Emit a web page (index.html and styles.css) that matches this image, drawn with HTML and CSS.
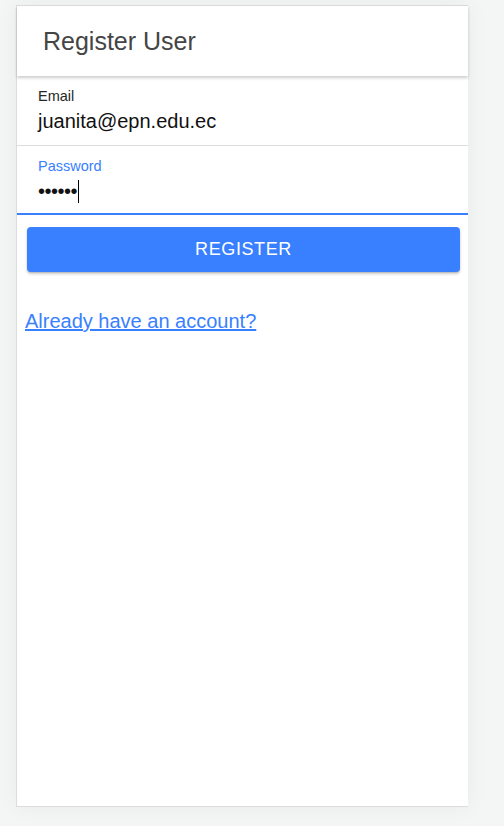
FILE: index.html
```html
<!DOCTYPE html>
<html lang="en">
<head>
<meta charset="utf-8">
<title>Register User</title>
<link rel="stylesheet" href="styles.css">
</head>
<body>
<div class="stage">
  <div class="card">
    <header class="toolbar">
      <h1 class="title">Register User</h1>
    </header>
    <main class="content">
      <div class="item">
        <div class="label">Email</div>
        <div class="value">juanita@epn.edu.ec</div>
      </div>
      <div class="item item-focused">
        <div class="label label-focused">Password</div>
        <div class="value value-password">••••••<span class="caret"></span></div>
      </div>
      <div class="btn-row">
        <button class="btn" type="button">REGISTER</button>
      </div>
      <a class="link" href="#">Already have an account?</a>
    </main>
  </div>
</div>
</body>
</html>
```
FILE: styles.css
```css
html, body {
  margin: 0;
  padding: 0;
  background: #ffffff;
  font-family: "Liberation Sans", Arial, sans-serif;
}

.stage {
  height: 826px;
  background: #f4f5f5;
  padding: 5px 0 0 16px;
  box-sizing: border-box;
}

.card {
  width: 452px;
  height: 802px;
  box-sizing: border-box;
  background: #ffffff;
  border: 1px solid #dcdcdc;
  border-right: none;
  box-shadow: 0 0 22px rgba(0, 0, 0, 0.05);
  display: flex;
  flex-direction: column;
}

.toolbar {
  height: 70px;
  flex: none;
  box-shadow: 0 2px 3px rgba(0, 0, 0, 0.2);
  position: relative;
  z-index: 1;
}

.title {
  margin: 0;
  padding-left: 26px;
  font-size: 25px;
  font-weight: normal;
  line-height: 70px;
  color: #454545;
}

.content {
  display: flex;
  flex-direction: column;
}

.item {
  padding: 11px 0 11px 21px;
  border-bottom: 1px solid #dedede;
}

.item-focused {
  padding-bottom: 9px;
  border-bottom: 2px solid #3880ff;
}

.label {
  font-size: 14.5px;
  line-height: 18px;
  color: #262626;
  margin-bottom: 3px;
}

.label-focused {
  color: #3880ff;
}

.value {
  font-size: 20px;
  line-height: 26px;
  color: #111111;
}

.value-password {
  display: flex;
  align-items: center;
  letter-spacing: -0.5px;
}

.caret {
  display: inline-block;
  width: 1px;
  height: 23px;
  background: #000000;
  margin-left: 1px;
}

.btn-row {
  padding: 12px 8px 0 10px;
}

.btn {
  display: block;
  width: 100%;
  height: 45px;
  border: none;
  border-radius: 4px;
  background: #3880ff;
  color: #ffffff;
  font-family: "Liberation Sans", Arial, sans-serif;
  font-size: 18px;
  letter-spacing: 0.6px;
  line-height: 45px;
  padding: 0;
  box-shadow: 0 2px 3px rgba(0, 0, 0, 0.2), 0 1px 1px rgba(0, 0, 0, 0.1);
}

.link {
  align-self: flex-start;
  margin: 38px 0 0 8px;
  font-size: 20px;
  line-height: 23px;
  color: #3880ff;
  text-decoration: underline;
}
```
